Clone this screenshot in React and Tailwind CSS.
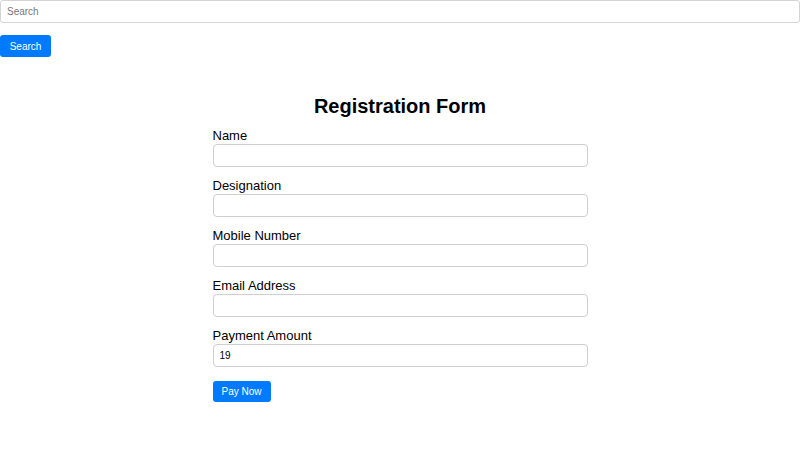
import { useState } from 'react';

const fields = [
  { label: 'Name', name: 'name', type: 'text' },
  { label: 'Designation', name: 'designation', type: 'text' },
  { label: 'Mobile Number', name: 'mobile', type: 'tel' },
  { label: 'Email Address', name: 'email', type: 'email' },
  { label: 'Payment Amount', name: 'amount', type: 'text' },
];

export default function App() {
  const [query, setQuery] = useState('');
  const [form, setForm] = useState({ name: '', designation: '', mobile: '', email: '', amount: '19' });

  const update = (key, value) => setForm((f) => ({ ...f, [key]: value }));

  return (
    <div className="min-h-[450px] bg-white text-black font-['Liberation_Sans',Arial,sans-serif]">
      {/* Search bar */}
      <input
        value={query}
        onChange={(e) => setQuery(e.target.value)}
        placeholder="Search"
        className="block w-full h-[23px] px-[6px] text-[10px] border border-[#d4d4d4] rounded-[3px] placeholder:text-[#777] outline-none"
      />
      <button className="mt-[12px] h-[22px] w-[51px] rounded-[3px] bg-[#007bff] text-white text-[10px]">
        Search
      </button>

      {/* Registration form */}
      <div className="w-[375px] mx-auto mt-[35px]">
        <h1 className="text-[20px] leading-[28px] font-bold text-center mb-[8px]">Registration Form</h1>
        {fields.map((f) => (
          <div key={f.name} className="mb-[11px]">
            <label className="block text-[13px] leading-[15px] mb-[1px]">{f.label}</label>
            <input
              type={f.type}
              value={form[f.name]}
              onChange={(e) => update(f.name, e.target.value)}
              className="block w-full h-[23px] px-[6px] text-[10px] border border-[#cfcfcf] rounded-[4px] outline-none"
            />
          </div>
        ))}
        <button className="mt-[2px] h-[21px] w-[58px] rounded-[3px] bg-[#007bff] text-white text-[10px]">
          Pay Now
        </button>
      </div>
    </div>
  );
}
